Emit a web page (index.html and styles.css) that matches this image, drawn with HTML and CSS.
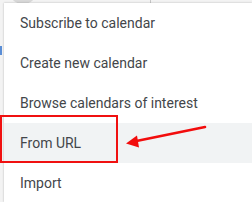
FILE: index.html
```html
<!DOCTYPE html>
<html lang="en">
<head>
    <meta charset="UTF-8">
    <title>Add calendar menu</title>
    <link rel="stylesheet" href="styles.css">
</head>
<body>

<div class="backdrop">
    <span class="avatar"></span>
    <span class="divider"></span>
    <span class="peek"></span>
</div>

<ul class="menu">
    <li>Subscribe to calendar</li>
    <li>Create new calendar</li>
    <li>Browse calendars of interest</li>
    <li class="active">From URL</li>
    <li>Import</li>
</ul>

<div class="mark"></div>

<svg class="arrow" width="252" height="202" viewBox="0 0 252 202">
    <line x1="205" y1="127" x2="134" y2="141.5" stroke="#f20c0c" stroke-width="2.6" stroke-linecap="round"/>
    <polygon points="126,143.5 137,135.5 139,147.5" fill="#f20c0c"/>
</svg>

</body>
</html>
```

FILE: styles.css
```css
body {
    margin: 0;
    width: 252px;
    height: 202px;
    overflow: hidden;
    position: relative;
    font-family: Roboto, 'Liberation Sans', sans-serif;
    background: #f3f3f3;
}

.backdrop {
    position: absolute;
    top: 0;
    left: 0;
    width: 252px;
    height: 202px;
}

.avatar {
    position: absolute;
    left: 8px;
    top: -26px;
    width: 30px;
    height: 30px;
    border-radius: 50%;
    background: #d8d8d8;
}

.divider {
    position: absolute;
    left: 150px;
    top: 0;
    width: 1px;
    height: 4px;
    background: #c8c8c8;
}

.peek {
    position: absolute;
    left: 0;
    top: 46px;
    width: 2px;
    height: 9px;
    background: #5b8ed6;
}

.menu {
    position: relative;
    list-style: none;
    margin: 3px 0 0 4px;
    padding: 0;
    background: white;
    box-shadow: 0 0 2px rgba(0, 0, 0, 0.25);
    height: 199px;
    overflow: hidden;
}

.menu li {
    height: 40px;
    line-height: 40px;
    padding-left: 16px;
    font-size: 14px;
    color: #43464a;
    white-space: nowrap;
}

.menu li.active {
    background: #f1f3f4;
}

.mark {
    position: absolute;
    left: 0;
    top: 115px;
    width: 114px;
    height: 44px;
    border: 2px solid #f01010;
}

.arrow {
    position: absolute;
    top: 0;
    left: 0;
}
```
